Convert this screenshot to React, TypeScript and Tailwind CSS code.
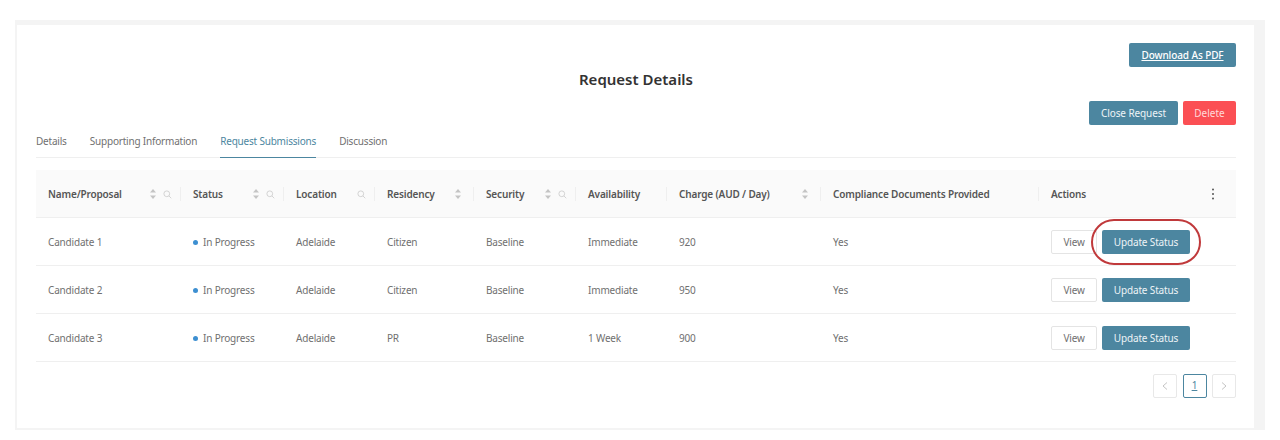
import React from "react";

const font = "font-['Noto_Sans','Open_Sans',sans-serif]";

function SortIcon() {
  return (
    <svg width="8" height="12" viewBox="0 0 8 12" className="shrink-0">
      <path d="M4 1 L7 4.6 H1 Z" fill="#c4c4c4" />
      <path d="M4 11 L7 7.4 H1 Z" fill="#c4c4c4" />
    </svg>
  );
}

function SearchIcon() {
  return (
    <svg width="9" height="9" viewBox="0 0 10 10" fill="none" stroke="#cfcfcf" strokeWidth="1" className="shrink-0">
      <circle cx="4.2" cy="4.2" r="3.2" />
      <path d="M6.6 6.6 L9.2 9.2" />
    </svg>
  );
}

type Col = { label: string; width: string; sort?: boolean; search?: boolean; divider?: boolean };

const cols: Col[] = [
  { label: "Name/Proposal", width: "w-[145px]", sort: true, search: true, divider: true },
  { label: "Status", width: "w-[103px]", sort: true, search: true, divider: true },
  { label: "Location", width: "w-[91px]", search: true, divider: true },
  { label: "Residency", width: "w-[99px]", sort: true, divider: true },
  { label: "Security", width: "w-[102px]", sort: true, search: true, divider: true },
  { label: "Availability", width: "w-[91px]", divider: true },
  { label: "Charge (AUD / Day)", width: "w-[154px]", sort: true, divider: true },
  { label: "Compliance Documents Provided", width: "w-[218px]", divider: true },
  { label: "Actions", width: "w-[197px]" },
];

const rows = [
  ["Candidate 1", "Adelaide", "Citizen", "Baseline", "Immediate", "920", "Yes"],
  ["Candidate 2", "Adelaide", "Citizen", "Baseline", "Immediate", "950", "Yes"],
  ["Candidate 3", "Adelaide", "PR", "Baseline", "1 Week", "900", "Yes"],
];

function Td({ children }: { children: React.ReactNode }) {
  return (
    <td className="h-[48px] border-b border-[#efefef] px-3 pt-[2px] text-[10px] tracking-[-0.18px] text-[#707070]">
      {children}
    </td>
  );
}

export default function App() {
  return (
    <div className={`h-[440px] w-[1280px] overflow-hidden bg-white pt-5 pl-[15px] ${font}`}>
      <div className="h-[410px] w-[1250px] bg-[#f4f4f4] pt-[5px] pr-[11px] pb-[2px] pl-[2px]">
        <div className="h-full bg-white pt-[18px] pr-[18px] pl-[19px]">
          <div className="flex justify-end">
            <button className="h-6 w-[107px] rounded-[2px] bg-[#4c86a0] text-[10px] font-medium tracking-[-0.1px] text-white underline">
              Download As PDF
            </button>
          </div>
          <h1 className="h-[24px] text-center text-[15px] leading-[24px] font-semibold text-[#333333]">Request Details</h1>
          <div className="mt-[10px] flex justify-end gap-[5px]">
            <button className="h-6 w-[89px] rounded-[2px] bg-[#4c86a0] text-[10px] tracking-[-0.1px] text-[#eef4f7]">Close Request</button>
            <button className="h-6 w-[53px] rounded-[2px] bg-[#fb4f54] text-[10px] text-[#ffd9da]">Delete</button>
          </div>

          <div className="mt-[11px] flex h-[22px] gap-[23px] border-b border-[#efefef] text-[10px] tracking-[-0.2px] text-[#707070]">
            <span className="leading-[11px]">Details</span>
            <span className="leading-[11px]">Supporting Information</span>
            <span className="h-[22px] border-b border-[#4c86a0] leading-[11px] text-[#4c86a0]">Request Submissions</span>
            <span className="leading-[11px]">Discussion</span>
          </div>

          <div className="relative mt-3">
            <table className="w-[1200px] table-fixed border-collapse">
              <thead>
                <tr className="h-[47px] bg-[#fafafa]">
                  {cols.map((c) => (
                    <th key={c.label} className={`${c.width} border-b border-[#efefef] p-0 pt-[2px] text-left`}>
                      <div
                        className={`flex h-[14px] items-center gap-[6px] pl-3 ${c.sort && !c.search ? "pr-[11px]" : "pr-[8px]"} ${c.divider ? "border-r border-[#efefef]" : ""}`}
                      >
                        <span className="mr-auto text-[10px] font-semibold tracking-[-0.15px] whitespace-nowrap text-[#555555]">{c.label}</span>
                        {c.sort && <SortIcon />}
                        {c.search && <SearchIcon />}
                        {c.label === "Actions" && (
                          <svg width="4" height="12" viewBox="0 0 4 12" className="mr-[13px]" fill="#555555">
                            <circle cx="2" cy="1.5" r="1" />
                            <circle cx="2" cy="6" r="1" />
                            <circle cx="2" cy="10.5" r="1" />
                          </svg>
                        )}
                      </div>
                    </th>
                  ))}
                </tr>
              </thead>
              <tbody>
                {rows.map((r) => (
                  <tr key={r[0]}>
                    <Td>{r[0]}</Td>
                    <Td>
                      <span className="flex items-center gap-[5px] whitespace-nowrap">
                        <span className="h-[5px] w-[5px] rounded-full bg-[#3d8fd1]" />
                        In Progress
                      </span>
                    </Td>
                    {r.slice(1).map((v, i) => (
                      <Td key={i}>{v}</Td>
                    ))}
                    <Td>
                      <div className="flex gap-[5px]">
                        <button className="h-6 w-[46px] rounded-[2px] border border-[#e4e4e4] bg-white text-[10px] text-[#707070]">View</button>
                        <button className="h-6 w-[88px] rounded-[2px] bg-[#4c86a0] text-[10px] tracking-[-0.15px] text-[#eef4f7]">Update Status</button>
                      </div>
                    </Td>
                  </tr>
                ))}
              </tbody>
            </table>
            <div className="absolute top-[49px] left-[1055px] h-[46px] w-[110px] rounded-full border-[2.5px] border-[#c0393b]" />
          </div>

          <div className="mt-[12px] flex justify-end gap-[5.5px] text-[10px]">
            <span className="flex h-6 w-6 items-center justify-center rounded-[2px] border border-[#e8e8e8]">
              <svg width="6" height="8" viewBox="0 0 6 8" fill="none" stroke="#c4c4c4"><path d="M5 0.5 L1 4 L5 7.5" /></svg>
            </span>
            <span className="flex h-6 w-6 items-center justify-center rounded-[2px] border border-[#4c86a0] text-[#4c86a0] underline">1</span>
            <span className="flex h-6 w-6 items-center justify-center rounded-[2px] border border-[#e8e8e8]">
              <svg width="6" height="8" viewBox="0 0 6 8" fill="none" stroke="#c4c4c4"><path d="M1 0.5 L5 4 L1 7.5" /></svg>
            </span>
          </div>
        </div>
      </div>
    </div>
  );
}
